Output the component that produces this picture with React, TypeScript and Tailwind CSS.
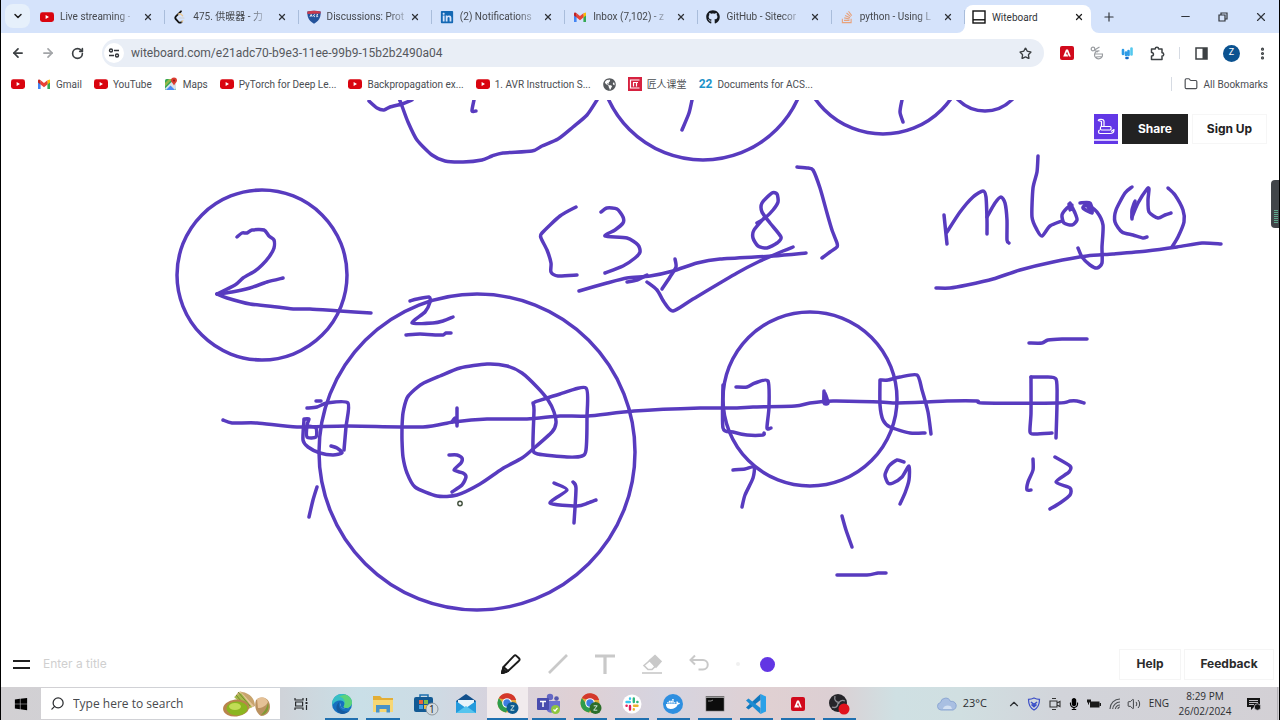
import React from 'react';
import {
  ArrowLeft,
  ArrowRight,
  ChevronDown,
  ChevronUp,
  EllipsisVertical,
  Folder,
  Minus,
  Plus,
  RotateCw,
  Search,
  Star,
  Volume2,
  X,
} from 'lucide-react';
import { FaDocker, FaGithub, FaGlobeAmericas, FaLinkedin, FaMicrophone, FaStackOverflow, FaWindows } from 'react-icons/fa';

type IconProps = { className?: string };

const YouTubeIcon = ({ className = 'w-[14px] h-[14px]' }: IconProps) => (
  <svg viewBox="0 0 14 14" className={className}>
    <rect x="0" y="2.3" width="14" height="9.6" rx="2.4" fill="#d9040f" />
    <path d="M5.6 5.1v4l3.4-2z" fill="#fff" />
  </svg>
);

const GmailIcon = () => (
  <svg viewBox="0 0 14 14" className="w-[14px] h-[14px]">
    <path d="M1 3.5V12h2.6V5.5z" fill="#4285f4" />
    <path d="M13 3.5V12h-2.6V5.5z" fill="#34a853" />
    <path d="M10.4 3.2L13 2.4v3.2l-2.6 2z" fill="#fbbc04" />
    <path d="M3.6 3.3L7 6l3.4-2.7v4.3L7 10.2 3.6 7.6z" fill="#ea4335" />
    <path d="M1 5.6V3.6C1 2.3 2.5 1.9 3.6 3.2v4.4z" fill="#c5221f" />
  </svg>
);

const LeetCodeIcon = () => (
  <svg viewBox="0 0 14 14" className="w-[14px] h-[14px]" fill="none" strokeLinecap="round">
    <path d="M8 1.3L3.1 6.2c-1 1-1 2.3 0 3.3l2.2 2.3c1 1 2.400 1 3.400 0" stroke="#111" strokeWidth="1.800" />
    <path d="M5.3 4.2c1-.8 2.200-.6 3.100.3l1.300 1.300M8.700 11.800l1.200-1.200" stroke="#ecc890" strokeWidth="1.200" />
    <path d="M6.400 8h4.600" stroke="#cfcfcf" strokeWidth="1.200" />
  </svg>
);

const AcsIcon = () => (
  <svg viewBox="0 0 14 14" className="w-[14px] h-[14px]">
    <path d="M.4 1.500C5 .4 9 .4 13.600 1.500c.6 5.500-2 10-6.600 12.200C2.400 11.500-.2 7 .4 1.500z" fill="#24539b" />
    <path d="M.4 1.500C5 .4 9 .4 13.600 1.500v2L.4 4z" fill="#c93a4c" />
    <path d="M3 6.800l1.200-2.300 1 2.300M8 4.800c-2-.6-2 2 0 1.800M11 4.600c-2-.3-1.500 1-.6 1.200.8.3.3 1.200-1.200.8" stroke="#fff" strokeWidth=".9" fill="none" />
  </svg>
);

const WiteboardIcon = () => (
  <svg viewBox="0 0 14 14" className="w-[14px] h-[14px]" fill="none" stroke="#111" strokeWidth="1.400">
    <rect x="1" y="1" width="12" height="12" />
    <path d="M1 9.800h12" />
  </svg>
);

const MapsIcon = () => (
  <svg viewBox="0 0 14 14" className="w-[14px] h-[14px]">
    <rect x="1" y="2" width="11" height="11" rx="1.500" fill="#34a853" />
    <path d="M1 11.500L9.500 3 12 5.500v6L10.500 13H2.500z" fill="#d8e3ea" />
    <path d="M2 13l4.500-4.500L11 13z" fill="#4a8af4" />
    <path d="M1 9.500L8.500 2H5L1 6z" fill="#f5c542" opacity=".5" />
    <path d="M10 .6a3 3 0 013 3c0 1.800-2 2.700-3 5-1-2.300-3-3.200-3-5a3 3 0 013-3z" fill="#dc3d31" />
    <circle cx="10" cy="3.600" r="1.100" fill="#8c1d18" />
  </svg>
);

const AdobeIcon = ({ className = 'w-[14px] h-[14px]' }: IconProps) => (
  <svg viewBox="0 0 14 14" className={className}>
    <rect width="14" height="14" rx="2" fill="#d10a1c" />
    <path d="M3.200 10.500L6 3.500h2l2.800 7H8.900L7 5.500l-1 2.800h1.400l.7 2.200z" fill="#fff" />
  </svg>
);

const ChromeIcon = ({ badge }: { badge: string }) => (
  <svg viewBox="0 0 24 24" className="w-6 h-6">
    <circle cx="11" cy="11" r="9.500" fill="#e0a93a" />
    <path d="M2.800 6.200A9.500 9.500 0 0120.200 8H11z" fill="#d4382c" />
    <path d="M2.800 6.200A9.500 9.500 0 0010 20.450L14 12.500 8 12.500z" fill="#2e9c4d" />
    <circle cx="11" cy="11" r="4.800" fill="#fff" />
    <circle cx="11" cy="11" r="3.700" fill="#3c7de0" />
    <circle cx="16.500" cy="16" r="6" fill={badge} />
    <path d="M14.700 13.800h3.500l-3.500 4.400h3.600" stroke="#cfe6df" strokeWidth="1" fill="none" />
  </svg>
);

const tabs = [
  { title: 'Live streaming -', icon: <YouTubeIcon /> },
  { title: '475. 供暖器 - 力', icon: <LeetCodeIcon /> },
  { title: 'Discussions: Prot', icon: <AcsIcon /> },
  { title: '(2) Notifications', icon: <FaLinkedin className="w-[14px] h-[14px] text-[#1368b4]" /> },
  { title: 'Inbox (7,102) - z', icon: <GmailIcon /> },
  { title: 'GitHub - Sitecor', icon: <FaGithub className="w-[14px] h-[14px] text-[#15191e]" /> },
  { title: 'python - Using L', icon: <FaStackOverflow className="w-[14px] h-[14px] text-[#e8a27c]" /> },
];

const TabStrip = () => (
  <div className="flex h-[33px] items-end bg-[#d5e3fb] pl-1">
    <button aria-label="Search tabs" className="mb-[5px] flex h-6 w-[25px] items-center justify-center rounded-lg bg-[#e6f0fb]">
      <ChevronDown className="h-3 w-3 text-[#1f1f1f]" strokeWidth={3} />
    </button>
    <div className="ml-[2px] flex h-[33px] w-[933px]">
      {tabs.map((tab) => (
        <div key={tab.title} className="flex min-w-0 flex-1 items-center pl-2">
          {tab.icon}
          <span className="ml-[6px] whitespace-nowrap text-[10px] text-[#45484d] [mask-image:linear-gradient(to_right,black_80%,#0005)]">
            {tab.title}
          </span>
          <button aria-label="Close tab" className="ml-auto flex h-4 w-4 items-center justify-center text-[#303338]">
            <X className="h-[10px] w-[10px]" strokeWidth={3} />
          </button>
          <span className="ml-2 h-[14px] w-px bg-[#a9bddb]" />
        </div>
      ))}
    </div>
    <div className="relative flex h-7 w-[126px] items-center rounded-t-lg bg-white pb-1 pl-[7px] text-[10px] text-[#303338]">
      <svg viewBox="0 0 8 8" className="absolute bottom-0 -left-2 h-2 w-2"><path d="M8 0v8H0a8 8 0 008-8z" fill="#fff" /></svg>
      <svg viewBox="0 0 8 8" className="absolute bottom-0 -right-2 h-2 w-2"><path d="M0 0v8h8a8 8 0 01-8-8z" fill="#fff" /></svg>
      <WiteboardIcon />
      <span className="ml-[6px]">Witeboard</span>
      <button aria-label="Close tab" className="mr-1 ml-auto flex h-4 w-4 items-center justify-center text-[#1f1f1f]">
        <X className="h-[10px] w-[10px]" strokeWidth={3} />
      </button>
    </div>
    <div className="flex h-[33px] flex-1 items-center text-[#30343a]">
      <button aria-label="New tab" className="ml-[11px]"><Plus className="h-[14px] w-[14px]" /></button>
      <div className="mr-[11px] ml-auto flex items-center gap-[26px]">
        <button aria-label="Minimize"><Minus className="h-[13px] w-[13px]" strokeWidth={2} /></button>
        <button aria-label="Restore">
          <svg viewBox="0 0 10 10" className="h-[10px] w-[10px]" fill="none" stroke="currentColor" strokeWidth="1.200">
            <path d="M1 3h6v6H1zM3 3V1h6v6H7" />
          </svg>
        </button>
        <button aria-label="Close window"><X className="h-[14px] w-[14px]" strokeWidth={2} /></button>
      </div>
    </div>
  </div>
);

const Toolbar = () => (
  <div className="flex h-10 items-center bg-white pr-[9px] pl-[10px] text-[#3c4043]">
    <div className="flex w-[91px] items-center gap-4">
      <button aria-label="Back"><ArrowLeft className="h-[14px] w-[14px]" strokeWidth={3} /></button>
      <button aria-label="Forward" className="text-[#a3a5a8]"><ArrowRight className="h-[14px] w-[14px]" strokeWidth={3} /></button>
      <button aria-label="Reload"><RotateCw className="h-[13px] w-[13px]" strokeWidth={3} /></button>
    </div>
    <div className="flex h-7 flex-1 items-center rounded-full bg-[#e9eef6] pr-3 pl-[2px]">
      <button aria-label="Site information" className="flex h-5 w-5 items-center justify-center rounded-full bg-white">
        <svg viewBox="0 0 12 12" className="h-3 w-3" fill="none" stroke="#303338" strokeWidth="1.400">
          <circle cx="3" cy="3.500" r="1.500" />
          <path d="M6 3.500h5M1 8.500h5" />
          <circle cx="9" cy="8.500" r="1.500" />
        </svg>
      </button>
      <input
        aria-label="Address"
        defaultValue="witeboard.com/e21adc70-b9e3-11ee-99b9-15b2b2490a04"
        className="ml-[7px] min-w-0 flex-1 bg-transparent text-[12px] text-[#55585d] outline-none"
      />
      <button aria-label="Bookmark this tab"><Star className="h-[13px] w-[13px]" strokeWidth={2.500} /></button>
    </div>
    <div className="ml-4 flex items-center">
      <AdobeIcon />
      <svg viewBox="0 0 14 14" className="ml-4 h-[14px] w-[14px]" fill="none" stroke="#9a9da1" strokeWidth="1.200">
        <circle cx="3" cy="3" r="1.800" />
        <path d="M4.500 4l5-3M4.500 4.500L8 6M12.500 8.500a4 4 0 11-3-3.500M5 8h8M6 11l6-.5" />
      </svg>
      <svg viewBox="0 0 14 14" className="ml-4 h-[14px] w-[14px]" fill="none" strokeLinecap="round" strokeWidth="2.600">
        <path d="M3 4v4M6 6.500v2.500M8.500 5v4" stroke="#2e9be6" />
        <path d="M11.500 2.500v6" stroke="#54c8ee" />
        <path d="M6.500 12h1" stroke="#1568c4" />
      </svg>
      <button aria-label="Extensions" className="ml-4">
        <svg viewBox="0 0 15 15" className="h-[15px] w-[15px]" fill="none" stroke="currentColor" strokeWidth="1.500" strokeLinejoin="round">
          <path d="M1.500 3h3.700c0-2.300 3.400-2.300 3.400 0H12v3.700c2.300 0 2.300 3.400 0 3.400V13.500H1.500V10c2.600 0 2.600-3.500 0-3.500z" />
        </svg>
      </button>
      <span className="ml-[14px] h-3 w-px bg-[#d6dbe3]" />
      <button aria-label="Side panel" className="ml-[15px]">
        <svg viewBox="0 0 13 13" className="h-[13px] w-[13px]">
          <rect x="1" y="1" width="11" height="11" fill="none" stroke="#3c4043" strokeWidth="1.500" />
          <path d="M7.500 1H12v11H7.500z" fill="#3c4043" />
        </svg>
      </button>
      <button className="ml-[15px] flex h-[17px] w-[17px] items-center justify-center rounded-full bg-[#0b5290] text-[9px] text-white">Z</button>
      <button aria-label="Menu" className="ml-[15px]"><EllipsisVertical className="h-[15px] w-[15px]" strokeWidth={3} /></button>
    </div>
  </div>
);

const bookmarks = [
  { label: '', icon: <YouTubeIcon /> },
  { label: 'Gmail', icon: <GmailIcon /> },
  { label: 'YouTube', icon: <YouTubeIcon /> },
  { label: 'Maps', icon: <MapsIcon /> },
  { label: 'PyTorch for Deep Le...', icon: <YouTubeIcon /> },
  { label: 'Backpropagation ex...', icon: <YouTubeIcon /> },
  { label: '1. AVR Instruction S...', icon: <YouTubeIcon /> },
  { label: '', icon: <FaGlobeAmericas className="h-[13px] w-[13px] text-[#56595d]" /> },
  {
    label: '匠人课堂',
    icon: (
      <svg viewBox="0 0 14 14" className="h-[14px] w-[14px]" fill="none">
        <rect width="14" height="14" fill="#d6213f" />
        <path d="M11.500 3h-9v8h9M5 5.500h5M5.500 5.500v4M8.500 5.500v4" stroke="#fff" strokeWidth="1.200" />
      </svg>
    ),
  },
  { label: 'Documents for ACS...', icon: <span className="text-[12px] font-bold text-[#1d93c9]">22</span> },
];

const BookmarksBar = () => (
  <nav className="flex h-[27px] items-center gap-3 bg-white pr-[11px] pb-[5px] pl-[10px] text-[10px] text-[#4a4d52]">
    {bookmarks.map((b, i) => (
      <a key={i} href="#" className="flex shrink-0 items-center gap-[5px] whitespace-nowrap">
        {b.icon}
        {b.label && <span>{b.label}</span>}
      </a>
    ))}
    <span className="ml-auto h-[14px] w-px bg-[#d6dbe3]" />
    <a href="#" className="flex items-center gap-[6px]">
      <Folder className="h-[14px] w-[14px]" />
      All Bookmarks
    </a>
  </nav>
);

// freehand strokes, each one a list of x,y points
const strokes = [
  '369,101 377,108 384,110 390,107 402,104 412,100',
  '399,98 402,106 408,122 417,140 432,155 445,161 463,162 482,160 492,156 503,153 532,151 542,146 558,139 573,127 587,115 597,100',
  '474,100 472,111 476,111',
  '692,100 689,113 682,130',
  '902,100 900,112 903,122',
  '237,237 242,233 247,233 252,230 264,230 269,236 274,240 274,248 269,257 262,265 255,271 243,278 235,285 217,294',
  '217,294 232,292 250,288 267,282 283,278',
  '217,294 227,298 250,304 277,307 295,309 310,309 340,311 371,313',
  '410,301 417,299 429,297 430,302 425,312 412,323 433,323 443,321 453,317',
  '406,335 420,334 437,335 443,335 446,333 451,333',
  '576,207 560,216 542,233 541,238 547,250 551,263 551,272 558,276 577,275',
  '601,212 607,208 617,209 623,217 623,223 615,230 605,236 627,238 638,245 640,252 635,258 623,266 605,273',
  '579,291 607,283 627,278 650,276 673,271 697,263 720,259 773,256 806,253',
  '627,282 637,280 647,275',
  '675,259 676,267 670,277 662,289',
  '647,282 657,290 664,302 673,311 693,299 737,273 758,262 783,251 793,247',
  '757,223 765,218 773,210 778,202 777,194 772,193 762,203 762,212 770,223 781,237 777,243 767,248 758,246 753,238 754,230 765,217',
  '797,167 808,168 813,170 820,188 827,213 832,230 837,243 837,247 830,252 822,258',
  '944,215 947,244',
  '947,232 960,212 973,197 983,191 986,197 987,220 987,234',
  '987,217 995,203 1001,197 1005,203 1007,220 1007,240 1009,243',
  '1038,156 1037,172 1033,188 1032,217 1037,230 1042,236 1050,226 1062,221',
  '1070,203 1075,213 1077,220 1072,225 1064,223 1062,215 1067,208 1072,205 1070,210 1069,204',
  '1080,203 1090,203 1092,213 1083,208 1087,205 1092,210 1088,207',
  '1087,204 1097,212 1103,225 1102,247 1102,263 1097,268 1090,265 1082,257 1078,248',
  '936,288 950,288 967,285 993,279 1020,270 1053,262 1087,256 1113,254 1147,251 1177,247 1202,243 1221,244',
  '1132,187 1125,193 1116,210 1115,222 1122,232 1133,235 1143,238 1147,237',
  '1132,219 1132,210 1135,201 1134,210',
  '1132,217 1138,203 1147,189 1149,189 1148,200 1149,212 1158,218 1165,215 1171,213',
  '1168,188 1175,195 1183,210 1184,222 1178,237 1172,247',
  '1029,343 1042,343 1048,340 1062,339 1087,339',
  '223,420 232,423 257,423 297,427 347,426 423,427 453,422 487,419 527,419 560,416 588,416 634,411 700,408 737,408 753,407 795,406 810,403 833,401 880,402 893,403 927,402 947,401 977,401 983,403 1058,403 1070,401 1077,401 1084,403',
  '307,408 317,407 327,403 348,403 346,427 344,450',
  '316,401 321,401',
  '304,420 303,440 308,447 320,453 333,455 342,453 337,448 331,446',
  '304,419 309,419 307,425 307,437 316,437 316,428 308,426',
  '317,487 313,500 309,517',
  '402,427 403,413 407,398 412,392 422,384 440,376 460,368 487,364 507,366 522,373 537,387 548,400 554,412 556,423 552,432 533,449 522,458 502,469 480,484 457,495 437,496 415,487 407,473 403,457 402,440 402,427',
  '457,408 457,426',
  '452,422 455,418 457,423',
  '449,455 457,455 462,458 461,463 454,470 463,473 466,477 462,485 452,492',
  '533,403 534,410 533,448 538,454 567,457 582,456 586,450 587,417 586,388 560,394 535,402',
  '554,483 567,490 550,503 577,506 588,503 596,500',
  '573,482 576,488 574,523',
  '736,387 747,387 755,383 768,381 769,407 767,428 771,428',
  '723,385 723,428 733,432 747,435 763,435 764,433',
  '733,470 745,469 754,467 753,478 745,495 742,507',
  '824,391 824,403 828,403 825,393 826,402',
  '881,380 888,380 900,377 917,375 922,390 928,412 931,434',
  '880,380 880,405 883,420 890,427 910,433 925,433',
  '904,462 897,460 889,466 885,475 888,483 893,483 902,477 909,466 909,480 905,493 900,504',
  '1031,377 1043,377 1056,379 1057,403 1056,438',
  '1031,377 1031,413 1030,432 1035,434 1052,433',
  '1033,459 1033,470 1028,482 1027,490 1031,490',
  '1055,457 1070,466 1069,472 1056,482 1070,488 1070,495 1060,503 1050,509',
  '842,516 846,530 852,547',
  '837,575 867,575 878,573 886,573',
];

const circles = [
  { cx: 262, cy: 275, r: 85 },
  { cx: 477, cy: 452, r: 158 },
  { cx: 810, cy: 399, r: 87 },
  { cx: 703, cy: 56, r: 104 },
  { cx: 883, cy: 51, r: 83 },
  { cx: 985, cy: 73, r: 38 },
];

// slightly rounded curve through the points of a stroke
const toPath = (stroke: string) => {
  const pts = stroke.split(' ').map((p) => p.split(',').map(Number));
  const k = 0.12;
  let d = `M${pts[0][0]} ${pts[0][1]}`;
  for (let i = 0; i < pts.length - 1; i++) {
    const a = pts[i - 1] ?? pts[i];
    const b = pts[i];
    const c = pts[i + 1];
    const e = pts[i + 2] ?? c;
    d += `C${b[0] + (c[0] - a[0]) * k} ${b[1] + (c[1] - a[1]) * k} ${c[0] - (e[0] - b[0]) * k} ${c[1] - (e[1] - b[1]) * k} ${c[0]} ${c[1]}`;
  }
  return d;
};

const Board = () => (
  <main className="relative min-h-0 flex-1 overflow-hidden bg-white">
    <svg className="absolute inset-0 h-full w-full" fill="none" strokeLinecap="round" strokeLinejoin="round">
      <g transform="translate(-1 -100)" stroke="#583bbf" strokeWidth="3.500">
        {circles.map((c, i) => (
          <circle key={i} {...c} />
        ))}
        {strokes.map((s, i) => (
          <path key={i} d={toPath(s)} />
        ))}
        <circle cx="460" cy="503.500" r="2.200" stroke="#44523f" strokeWidth="1.400" />
      </g>
    </svg>

    <div className="absolute top-[14px] right-3 flex h-[30px] gap-1 text-[12px] font-bold text-[#222] [font-family:Inter,sans-serif]">
      <button aria-label="Board menu" className="flex w-6 flex-col bg-[#6237e6]">
        <svg viewBox="0 0 24 25" className="h-[25px] w-6" fill="none" stroke="#fff" strokeWidth="1.200" strokeLinejoin="round">
          <path d="M4 6.500c1-1.500 5.500-1.500 6 .5v5.500M4 6.500l3.500 1v5M7.500 12.500h8.500c1.500 0 1.500 3.500 0 3.500H7.500c-1.500 0-1.500-3.500 0-3.500zM6 16c-2 0-2 3.500 0 3.500h10c2.500 0 4-1.500 4-4l-3 2" />
        </svg>
        <span className="h-[2px] w-full bg-[#d5c8ff]" />
      </button>
      <button className="w-[66px] bg-[#222] text-white">Share</button>
      <button className="w-[75px] border border-[#f6f6f6] bg-white">Sign Up</button>
    </div>

    <div className="absolute top-20 right-0 flex h-12 w-2 flex-col items-end justify-end gap-px rounded-l bg-[#414549] pr-px pb-[5px]">
      {[0, 1, 2, 3, 4, 5, 6].map((n) => (
        <span key={n} className="h-px w-1 bg-[#5fa78c]" />
      ))}
    </div>

    <footer className="absolute inset-x-0 bottom-0 grid h-[46px] grid-cols-3 items-center bg-white pr-[5px] pl-3">
      <div className="flex items-center gap-[13px]">
        <button aria-label="Open menu" className="flex w-[17px] flex-col gap-[5px]">
          <span className="h-[2px] bg-[#1f1f1f]" />
          <span className="h-[2px] bg-[#1f1f1f]" />
        </button>
        <input
          aria-label="Board title"
          placeholder="Enter a title"
          className="w-40 text-[12px] outline-none placeholder:text-[#cfcfcf] [font-family:Inter,sans-serif]"
        />
      </div>
      <div className="flex items-center justify-center gap-[27px] pr-[10px] text-[#c9c9c9]">
        <button aria-label="Pen" className="text-[#1b1b1b]">
          <svg viewBox="0 0 20 20" className="h-5 w-5" fill="none" stroke="currentColor" strokeWidth="1.900" strokeLinejoin="round">
            <path d="M1 19l1.500-6L13 1.800c.8-.8 1.600-.8 2.400 0l2.600 2.500c.8.8.8 1.600 0 2.400L7 17z" />
            <path d="M2.500 13L7 17l-6 2z" />
            <path d="M1 19l1-4L5 18z" fill="currentColor" />
          </svg>
        </button>
        <button aria-label="Line">
          <svg viewBox="0 0 20 20" className="h-5 w-5" stroke="currentColor" strokeWidth="2.600"><path d="M1 19L19 1" /></svg>
        </button>
        <button aria-label="Text">
          <svg viewBox="0 0 20 20" className="h-5 w-5" stroke="currentColor" strokeWidth="3.200"><path d="M0 2h20M10 2v18" /></svg>
        </button>
        <button aria-label="Eraser">
          <svg viewBox="0 0 20 20" className="h-5 w-5" fill="none" stroke="currentColor" strokeWidth="1.600">
            <path d="M9 5.500L2 11.500l4 4h4l3-3z" />
            <path d="M13 1.500l6 6-5 5.500-6.500-6.500z" fill="currentColor" />
            <path d="M0 19h20" />
          </svg>
        </button>
        <button aria-label="Undo">
          <svg viewBox="0 0 20 20" className="h-5 w-5" fill="none" stroke="currentColor" strokeWidth="2">
            <path d="M6 1.500L1.500 6 6 10.500M1.500 6H14a4.500 4.500 0 010 9.500H9.500" />
          </svg>
        </button>
        <div className="flex items-center gap-5">
          <span className="h-1 w-1 rounded-full bg-[#f0f0f0]" />
          <button aria-label="Colour" className="h-[15px] w-[15px] rounded-full bg-[#6236e4]" />
        </div>
      </div>
      <div className="flex justify-end gap-[3px] text-[12px] font-bold text-[#2b2b2b] [font-family:Inter,sans-serif]">
        <button className="h-[31px] w-[62px] border border-[#f5f5f5]">Help</button>
        <button className="h-[31px] w-[90px] border border-[#f5f5f5]">Feedback</button>
      </div>
    </footer>
  </main>
);

const EdgeIcon = () => (
  <svg viewBox="0 0 24 24" className="h-6 w-6">
    <circle cx="12" cy="12" r="10" fill="#1670c0" />
    <path d="M2.200 10C3.500 4.500 7.500 2 12 2c6 0 10 4 10 8.500 0 3.500-3 5.500-6 5.500-2 0-3-1-2-2.200 1.500-2 0-5.300-3.500-5.300C6.500 8.500 4 10 2.200 14z" fill="#36bfc5" />
    <path d="M15 2.500c4.500 1.300 7 4.500 7 8 0 3.500-3 5.500-6 5.500-2 0-3-1-2-2.200C16 10 14 5 9 4.500z" fill="#5cd37b" />
    <path d="M10 9c-3 4 0 10 5.500 10.500 2 .2 3.500-.5 4.500-1.300-2 2.500-5 3.800-8 3.800C6 21 4 14 10 9z" fill="#155a9f" />
    <path d="M11 11c-1.500 4 2 7.500 8 5.500-1.500 1-6 1-8-2z" fill="#d8ebf4" />
  </svg>
);

const ExplorerIcon = () => (
  <svg viewBox="0 0 24 24" className="h-6 w-6">
    <path d="M2 4h7l2 2h11v14H2z" fill="#e3ae35" />
    <path d="M2 8h20v12H2z" fill="#f7d774" />
    <path d="M5 13h14v7.500h-3.500V17h-7v3.500H5z" fill="#4892c8" />
  </svg>
);

const StoreIcon = () => (
  <svg viewBox="0 0 28 24" className="h-6 w-7">
    <path d="M9 6V3h8v3" fill="none" stroke="#1b6fae" strokeWidth="1.500" />
    <rect x="3" y="5" width="19" height="15" rx="2" fill="#125a94" />
    <path d="M8 8h4v4H8z" fill="#e8643c" /><path d="M13 8h4v4h-4z" fill="#7fc04a" />
    <path d="M8 13h4v4H8z" fill="#45a4e4" /><path d="M13 13h4v4h-4z" fill="#f0c13f" />
    <circle cx="21" cy="17" r="6" fill="#d3dbe0" stroke="#7d858b" strokeWidth=".8" />
    <text x="18" y="21" fontSize="10" fill="#222">1</text>
  </svg>
);

const MailIcon = () => (
  <svg viewBox="0 0 24 24" className="h-6 w-6">
    <path d="M2 9l10-7 10 7v12H2z" fill="#12508c" />
    <path d="M4 8h16v8H4z" fill="#e8f4fa" />
    <path d="M2 9l10 7 10-7v12H2z" fill="#249bdd" />
    <path d="M2 21l10-7 10 7z" fill="#56c4ee" />
  </svg>
);

const TeamsIcon = () => (
  <svg viewBox="0 0 24 24" className="h-6 w-6">
    <circle cx="13" cy="5" r="3.200" fill="#6467c4" /><circle cx="19.500" cy="6.500" r="2.300" fill="#5558ae" />
    <path d="M9 9h14v7a5 5 0 01-6 4c-5 2-8-1-8-5z" fill="#6a6fd0" />
    <rect x="0" y="6" width="12" height="12" rx="1" fill="#484cae" />
    <path d="M3 9.500h6M6 9.500V15" stroke="#fff" strokeWidth="1.500" />
    <circle cx="18.500" cy="17.500" r="4.500" fill="#8ec63f" /><path d="M16.500 17.500l1.500 1.500 2.500-3" fill="none" stroke="#fff" strokeWidth="1.200" />
  </svg>
);

const SlackIcon = () => (
  <svg viewBox="0 0 24 24" className="h-6 w-6" strokeWidth="2.400" strokeLinecap="round">
    <circle cx="12" cy="12" r="9.500" fill="#fff" />
    <path d="M6.500 10h3.300M10 6.500v.3" stroke="#36c5f0" /><path d="M13.800 10V6.500M17.300 10h.2" stroke="#2eb67d" />
    <path d="M14 13.800h3.500M13.800 17.300v.2" stroke="#ecb22e" /><path d="M10 14v3.500M6.500 13.800h.2" stroke="#e01e5a" />
  </svg>
);

const TerminalIcon = () => (
  <svg viewBox="0 0 24 24" className="h-6 w-6">
    <rect x="3" y="4.500" width="18" height="14.500" fill="#0c0c0c" stroke="#777" strokeWidth=".6" />
    <path d="M3 5.500h18" stroke="#bbb" strokeWidth=".8" /><path d="M5 9h3l2-1" stroke="#888" fill="none" />
  </svg>
);

const VsCodeIcon = () => (
  <svg viewBox="0 0 24 24" className="h-6 w-6">
    <path d="M16.500 2L22 4.500v15L16.500 22z" fill="#2aa1e8" />
    <path d="M16.500 2v6L4.500 17.500 2 15.500z" fill="#1177bd" />
    <path d="M16.500 22v-6L4.500 6.500 2 8.500z" fill="#1c8bd2" />
  </svg>
);

const ObsIcon = () => (
  <svg viewBox="0 0 24 24" className="h-6 w-6">
    <circle cx="11" cy="11" r="9" fill="#252429" />
    <path d="M8 4c-1 4 1 6 4 6.500M18 9c-3-1.500-6 0-6.500 3M5 15c3.500 1.500 6-.5 6-4" stroke="#8e8e94" strokeWidth="1.300" fill="none" />
    <circle cx="17" cy="17" r="5.500" fill="#e0121c" />
  </svg>
);

const apps = [
  { name: 'Edge', icon: <EdgeIcon />, open: true },
  { name: 'File Explorer', icon: <ExplorerIcon />, open: true },
  { name: 'Microsoft Store', icon: <StoreIcon /> },
  { name: 'Mail', icon: <MailIcon /> },
  { name: 'Chrome', icon: <ChromeIcon badge="#0d5b8f" />, open: true, active: true },
  { name: 'Teams', icon: <TeamsIcon />, open: true },
  { name: 'Chrome, second profile', icon: <ChromeIcon badge="#2c6e2a" />, open: true },
  { name: 'Slack', icon: <SlackIcon />, open: true },
  {
    name: 'Docker',
    icon: (
      <span className="flex h-5 w-5 items-center justify-center rounded-full bg-[#2e8fe0] text-white">
        <FaDocker className="h-[14px] w-[14px]" />
      </span>
    ),
    open: true,
  },
  { name: 'Command Prompt', icon: <TerminalIcon />, open: true },
  { name: 'Visual Studio Code', icon: <VsCodeIcon />, open: true },
  { name: 'Adobe', icon: <AdobeIcon />, open: true },
  { name: 'OBS', icon: <ObsIcon />, open: true },
];

const Taskbar = () => (
  <div className="flex h-[33px] items-stretch bg-[linear-gradient(to_right,#d2d0d3_0%,#cfd3d9_22%,#c9dfe7_28%,#ccdce5_33%,#d6d3de_38%,#dfd0d4_45%,#d5d4e0_52%,#e0d0d2_60%,#dccfd3_65%,#cfe0e3_70%,#d0dfe1_75%,#d2d4da_83%,#d3d0d5_100%)] text-[#2c2e31] [font-family:'Open_Sans',sans-serif]">
    <button aria-label="Start" className="flex w-10 items-center justify-center text-black"><FaWindows className="h-[14px] w-[14px]" /></button>
    <label className="my-px flex w-[239px] items-center bg-white pl-[9px]">
      <Search className="h-[15px] w-[15px] -scale-x-100" strokeWidth={2} />
      <input
        aria-label="Type here to search"
        placeholder="Type here to search"
        className="ml-2 min-w-0 flex-1 text-[12px] outline-none placeholder:text-[#484a4d]"
      />
      <svg viewBox="0 0 50 30" className="mr-2 h-[30px] w-[50px]">
        <path d="M13 8c2-5 5-6 7-5 8 1 13 7 13 14l-9 4z" fill="#c8a46d" />
        <path d="M18 2l14 15-6 3-11-12z" fill="#e6c69a" />
        <path d="M12 8l7-4 11 14-5 2z" fill="#a6b94b" />
        <path d="M16 3l12 14M14 6l11 13" stroke="#718b2c" strokeWidth="1" />
        <ellipse cx="14" cy="19" rx="13" ry="8.500" fill="#b9844d" transform="rotate(-6 14 19)" />
        <ellipse cx="15" cy="19.500" rx="10.500" ry="7" fill="#8bb520" />
        <ellipse cx="13" cy="17.500" rx="6" ry="3.500" fill="#c2dc55" />
        <path d="M34 11c4-4 11-3 13 2 3 7-1 14-8 14-5-3-7-10-5-16z" fill="#ba915f" />
        <path d="M35 10c5-3 10-1 11 3-2 4-6 6-10 6z" fill="#e5c196" />
        <path d="M46 14c2 6-2 12-7 12 3-3 6-7 7-12z" fill="#7f9b33" />
      </svg>
    </label>
    <button aria-label="Task view" className="flex w-[41px] items-center justify-center">
      <svg viewBox="0 0 14 14" className="h-[14px] w-[14px]" fill="none" stroke="#26282b" strokeWidth="1.200">
        <path d="M1 1v2h8V1M1 13v-2h8v2M1.600 5h7v4h-7zM12.500 1v3M12.500 8v5" />
        <path d="M11.500 6h2" strokeWidth="2" />
      </svg>
    </button>
    <div className="flex w-[539px] shrink-0">
      {apps.map((app) => (
        <button
          key={app.name}
          aria-label={app.name}
          className={`relative flex flex-1 items-center justify-center ${app.active ? 'bg-[#f1ebed]' : ''}`}
        >
          {app.icon}
          {app.open && <span className={`absolute bottom-0 h-[2px] bg-[#2070b0] ${app.active ? 'inset-x-0' : 'inset-x-1'}`} />}
        </button>
      ))}
    </div>
    <div className="ml-auto flex items-center pr-px text-[11px]">
      <svg viewBox="0 0 20 14" className="h-[14px] w-5">
        <path d="M4 13a3.800 3.800 0 01-.5-7.500A5.200 5.200 0 0113.500 4.500 4.300 4.300 0 0116 13z" fill="#a9bfe2" stroke="#8da8d3" />
        <path d="M6 11.500c1-3 5-4 8-2l1 2.500H6z" fill="#d3e0f2" />
      </svg>
      <span className="ml-[6px] w-11">23°C</span>
      <ChevronUp className="h-[14px] w-[14px]" strokeWidth={2} />
      <svg viewBox="0 0 14 14" className="ml-[6px] h-[14px] w-[14px]" fill="none" stroke="#3d50c8" strokeWidth="1.200">
        <path d="M7 1c2 1 4 1.300 5.500 1.300 0 5-1 8.500-5.500 10.700C2.500 10.800 1.500 7.300 1.500 2.300 3 2.300 5 2 7 1z" />
        <path d="M4 5l3 2.500L10 5M4.500 7.500L7 9.700l2.500-2.200" strokeWidth="1.600" />
      </svg>
      <svg viewBox="0 0 12 14" className="ml-2 h-[14px] w-3" fill="none" stroke="#333" strokeWidth="1.100">
        <path d="M3 1.500h4M3 12.500h4M1 4h7v6H1zM8 6l3-1.500v5L8 8" />
      </svg>
      <FaMicrophone className="ml-2 h-3 w-[10px] text-black" />
      <svg viewBox="0 0 14 14" className="ml-2 h-[14px] w-[14px]">
        <rect x="3" y="4.500" width="9.500" height="6" fill="#1a1a1a" />
        <path d="M12.500 6h1.500v3h-1.500zM0 2.500h4v3H2v2H1v-2H0z" fill="#1a1a1a" />
      </svg>
      <svg viewBox="0 0 12 12" className="ml-2 h-3 w-3" fill="none" stroke="#4d5054" strokeWidth="1.100">
        <path d="M1 11A10 10 0 0111 1M3.700 11A7.500 7.500 0 0111 4M6.400 11A4.800 4.800 0 0111 7M9 11a2 2 0 012-2" />
      </svg>
      <Volume2 className="ml-[6px] h-[14px] w-[14px]" strokeWidth={1.500} />
      <span className="ml-2 text-[10px]">ENG</span>
      <div className="ml-[10px] flex w-[52px] flex-col items-center text-[10px] leading-[15px] whitespace-nowrap">
        <span>8:29 PM</span>
        <span>26/02/2024</span>
      </div>
      <svg viewBox="0 0 14 14" className="ml-4 h-[14px] w-[14px]">
        <path d="M0 1h13v9H7l-3 3v-3H0z" fill="#151515" />
        <path d="M2 3.500h9M2 5.500h9M2 7.500h5" stroke="#d3d0d5" strokeWidth=".9" />
        <circle cx="10.500" cy="10" r="3.200" fill="#151515" stroke="#d3d0d5" strokeWidth=".7" />
      </svg>
      <span className="ml-4 h-[33px] w-px bg-[#b3b1b6]" />
    </div>
  </div>
);

export default function App() {
  return (
    <div className="flex h-screen flex-col overflow-hidden border-x border-black bg-white [font-family:Roboto,'Noto_Sans_CJK_SC',sans-serif]">
      <TabStrip />
      <Toolbar />
      <BookmarksBar />
      <Board />
      <Taskbar />
    </div>
  );
}
